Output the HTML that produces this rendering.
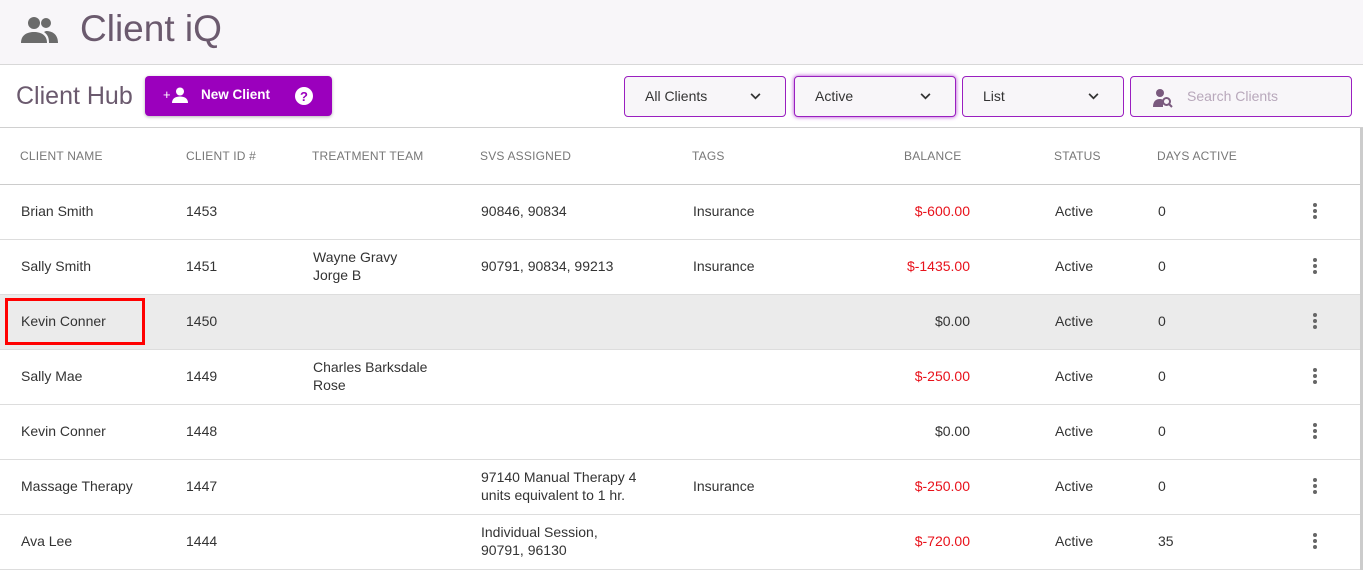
<!DOCTYPE html>
<html><head><style>
*{box-sizing:border-box;margin:0;padding:0}
body{width:1363px;height:570px;overflow:hidden;background:#fff;font-family:"Liberation Sans",sans-serif;color:#333;position:relative}
.top{position:absolute;left:0;top:0;width:1363px;height:65px;background:#f8f6f9;border-bottom:1px solid #d8d8d8}
.title{position:absolute;left:80px;top:8px;font-size:37px;color:#6b5a6e}
.bar{position:absolute;left:0;top:65px;width:1363px;height:63px;border-bottom:1px solid #d0d0d0}
.hub{position:absolute;left:16px;top:82px;font-size:25px;color:#6b5a6e}
.btn{position:absolute;left:145px;top:76px;width:187px;height:40px;background:#9b00bd;border-radius:4px;color:#fff;font-size:14px;box-shadow:0 1px 3px rgba(0,0,0,.3)}
.dd{position:absolute;top:76px;height:41px;border:1px solid #9a1fc0;border-radius:4px;background:#f8f6f9;font-size:14px;color:#333}
.dd span{position:absolute;left:20px;top:11px}
.dd svg{position:absolute;right:24px;top:16px}
.th{position:absolute;top:149px;font-size:12px;color:#777;letter-spacing:.2px}
.row{position:absolute;left:0;width:1360px;height:55px;border-bottom:1px solid #ddd}
.c{position:absolute;font-size:14px;line-height:18px}
.red{color:#e8121b}
.dots{position:absolute;left:1313px;width:4px}
.dots i{display:block;width:4px;height:4px;border-radius:50%;background:#666;margin-bottom:2px}
</style></head><body>
<div class="top">
<svg style="position:absolute;left:20px;top:15px" width="40" height="30" viewBox="0 0 40 30"><circle cx="14" cy="8" r="6" fill="#6b6b6b"/><path d="M1 28c0-8 6-11 13-11s13 3 13 11z" fill="#6b6b6b"/><circle cx="26" cy="8" r="5" fill="#6b6b6b"/><path d="M26 16c6 0 12 3 12 12h-9c0-5-1-8-5-11z" fill="#6b6b6b"/></svg>
<div class="title">Client iQ</div></div>
<div class="bar"></div>
<div class="hub">Client Hub</div>
<div class="btn"><span style="position:absolute;left:18px;top:11px;font-size:13px">+</span>
<svg style="position:absolute;left:27px;top:11px" width="16" height="16" viewBox="0 0 16 16"><circle cx="8" cy="4.5" r="4" fill="#fff"/><path d="M0 16c0-5 4-6.5 8-6.5s8 1.5 8 6.5z" fill="#fff"/></svg>
<span style="position:absolute;left:56px;top:11px;font-weight:bold;font-size:13.5px">New Client</span>
<svg style="position:absolute;left:150px;top:11px" width="18" height="18" viewBox="0 0 18 18"><circle cx="9" cy="9" r="9" fill="#fff"/><text x="9" y="14" text-anchor="middle" font-size="13" font-weight="bold" fill="#9b00bd" font-family="Liberation Sans">?</text></svg></div>
<div class="dd" style="left:624px;width:162px"><span>All Clients</span><svg width="11" height="7" viewBox="0 0 12 8"><path d="M1 1l5 5 5-5" stroke="#333" stroke-width="2" fill="none"/></svg></div>
<div class="dd" style="left:794px;width:162px;box-shadow:0 0 4px #b040d0"><span>Active</span><svg width="11" height="7" viewBox="0 0 12 8"><path d="M1 1l5 5 5-5" stroke="#333" stroke-width="2" fill="none"/></svg></div>
<div class="dd" style="left:962px;width:162px"><span>List</span><svg width="11" height="7" viewBox="0 0 12 8"><path d="M1 1l5 5 5-5" stroke="#333" stroke-width="2" fill="none"/></svg></div>
<div class="dd" style="left:1130px;width:222px"><svg style="left:22px;top:11px" width="20" height="20" viewBox="0 0 20 20"><circle cx="7" cy="5" r="4" fill="#7a5a7e"/><path d="M0 19c0-6 3-8 7-8 2 0 3 1 3 1v7z" fill="#7a5a7e"/><circle cx="13.5" cy="13.5" r="3.5" stroke="#7a5a7e" stroke-width="2" fill="none"/><path d="M16 16l3 3" stroke="#7a5a7e" stroke-width="2"/></svg><span style="left:56px;color:#b8a8bb">Search Clients</span></div>
<div style="position:absolute;left:0;top:128px;width:1360px;height:57px;border-bottom:1px solid #ccc"></div>
<div style="position:absolute;left:1360px;top:128px;width:3px;height:442px;background:#ccc"></div>
<div class="th" style="left:20px">CLIENT NAME</div><div class="th" style="left:186px">CLIENT ID #</div><div class="th" style="left:312px">TREATMENT TEAM</div><div class="th" style="left:480px">SVS ASSIGNED</div><div class="th" style="left:692px">TAGS</div><div class="th" style="left:904px">BALANCE</div><div class="th" style="left:1054px">STATUS</div><div class="th" style="left:1157px">DAYS ACTIVE</div>

<div class="row" style="top:185px"><div class="c" style="left:21px;top:17px">Brian Smith</div><div class="c" style="left:186px;top:17px">1453</div><div class="c" style="left:481px;top:17px">90846, 90834</div><div class="c" style="left:693px;top:17px">Insurance</div><div class="c red" style="right:390px;top:17px">$-600.00</div><div class="c" style="left:1055px;top:17px">Active</div><div class="c" style="left:1158px;top:17px">0</div><div class="dots" style="top:18px"><i></i><i></i><i></i></div></div>
<div class="row" style="top:240px"><div class="c" style="left:21px;top:17px">Sally Smith</div><div class="c" style="left:186px;top:17px">1451</div><div class="c" style="left:313px;top:8px">Wayne Gravy<br>Jorge B</div><div class="c" style="left:481px;top:17px">90791, 90834, 99213</div><div class="c" style="left:693px;top:17px">Insurance</div><div class="c red" style="right:390px;top:17px">$-1435.00</div><div class="c" style="left:1055px;top:17px">Active</div><div class="c" style="left:1158px;top:17px">0</div><div class="dots" style="top:18px"><i></i><i></i><i></i></div></div>
<div class="row" style="top:295px;background:#ebebeb"><div class="c" style="left:21px;top:17px">Kevin Conner</div><div class="c" style="left:186px;top:17px">1450</div><div class="c" style="right:390px;top:17px">$0.00</div><div class="c" style="left:1055px;top:17px">Active</div><div class="c" style="left:1158px;top:17px">0</div><div class="dots" style="top:18px"><i></i><i></i><i></i></div></div>
<div class="row" style="top:350px"><div class="c" style="left:21px;top:17px">Sally Mae</div><div class="c" style="left:186px;top:17px">1449</div><div class="c" style="left:313px;top:8px">Charles Barksdale<br>Rose</div><div class="c red" style="right:390px;top:17px">$-250.00</div><div class="c" style="left:1055px;top:17px">Active</div><div class="c" style="left:1158px;top:17px">0</div><div class="dots" style="top:18px"><i></i><i></i><i></i></div></div>
<div class="row" style="top:405px"><div class="c" style="left:21px;top:17px">Kevin Conner</div><div class="c" style="left:186px;top:17px">1448</div><div class="c" style="right:390px;top:17px">$0.00</div><div class="c" style="left:1055px;top:17px">Active</div><div class="c" style="left:1158px;top:17px">0</div><div class="dots" style="top:18px"><i></i><i></i><i></i></div></div>
<div class="row" style="top:460px"><div class="c" style="left:21px;top:17px">Massage Therapy</div><div class="c" style="left:186px;top:17px">1447</div><div class="c" style="left:481px;top:8px">97140 Manual Therapy 4<br>units equivalent to 1 hr.</div><div class="c" style="left:693px;top:17px">Insurance</div><div class="c red" style="right:390px;top:17px">$-250.00</div><div class="c" style="left:1055px;top:17px">Active</div><div class="c" style="left:1158px;top:17px">0</div><div class="dots" style="top:18px"><i></i><i></i><i></i></div></div>
<div class="row" style="top:515px"><div class="c" style="left:21px;top:17px">Ava Lee</div><div class="c" style="left:186px;top:17px">1444</div><div class="c" style="left:481px;top:8px">Individual Session,<br>90791, 96130</div><div class="c red" style="right:390px;top:17px">$-720.00</div><div class="c" style="left:1055px;top:17px">Active</div><div class="c" style="left:1158px;top:17px">35</div><div class="dots" style="top:18px"><i></i><i></i><i></i></div></div>
<div style="position:absolute;left:5px;top:298px;width:140px;height:47px;border:3px solid #f00"></div>
</body></html>
